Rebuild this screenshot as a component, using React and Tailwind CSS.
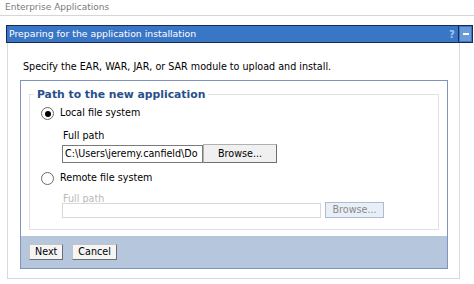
const Radio = ({ checked }) => (
  <span className="w-[13px] h-[13px] rounded-full border border-[#6b6b6b] bg-white flex items-center justify-center shrink-0">
    {checked && <span className="w-[6px] h-[6px] rounded-full bg-black" />}
  </span>
);

const App = () => {
  return (
    <div className="w-[474px] h-[284px] bg-white overflow-hidden text-[9.6px] text-black" style={{ fontFamily: '"DejaVu Sans", Verdana, sans-serif' }}>
      <div className="h-[16px] border-b border-[#d6d6d6] pl-[5px] pt-[3px] text-[#7a7a7a] text-[9px] leading-none">
        Enterprise Applications
      </div>

      <div className="mt-[9px] ml-[6px] mr-[1px] h-[18px] border border-[#1b2b50] bg-[#3a76c6] flex items-center">
        <span className="flex-1 pl-[2px] text-white text-[9.3px]">Preparing for the application installation</span>
        <span className="w-[10px] h-[14px] mr-[1px] flex items-center justify-center text-[#a9c6ea] font-bold text-[10px]">?</span>
        <span className="w-px h-full bg-[#1b2b50]" />
        <span className="w-[11px] h-[14px] mx-[1px] bg-[#6a9ad8] flex items-center justify-center">
          <span className="w-[6px] h-[2px] bg-white" />
        </span>
      </div>

      <div className="ml-[7px] w-[453px] h-[236px] border-x border-b border-[#d9d9d9] pt-[19px] px-[12px]">
        <div className="pl-[3px] leading-none">Specify the EAR, WAR, JAR, or SAR module to upload and install.</div>

        <div className="mt-[8px] w-[428px] h-[189px] border border-[#8094bd] flex flex-col">
          <div className="flex-1 px-[8px] pt-[9px]">
            <fieldset className="border border-[#e2e2e2] h-[140px] px-[10px]">
              <legend className="px-[3px] -ml-[6px] text-[10.8px] font-bold text-[#284f8c] leading-none">
                Path to the new application
              </legend>
              <div className="flex items-center gap-[6px] mt-[6px] pl-px">
                <Radio checked />
                <span>Local file system</span>
              </div>
              <div className="pl-[23px] mt-[10px] leading-none">Full path</div>
              <div className="ml-[22px] mt-[4px] flex items-center">
                <div className="w-[141px] h-[18px] border border-[#7a7a7a] bg-white px-[2px] flex items-center overflow-hidden whitespace-nowrap">
                  C:\Users\jeremy.canfield\Do
                </div>
                <button className="w-[74px] h-[19px] bg-[#f0f0f0] border border-[#b0b0b0] border-r-[#6e6e6e] border-b-[#6e6e6e] text-[9.6px]">
                  Browse...
                </button>
              </div>
              <div className="flex items-center gap-[6px] mt-[8px] pl-px">
                <Radio />
                <span>Remote file system</span>
              </div>
              <div className="pl-[23px] mt-[8px] leading-none text-[#b8b8b8]">Full path</div>
              <div className="ml-[22px] -mt-px flex items-center gap-[4px]">
                <div className="w-[259px] h-[15px] border border-[#d8d8d8] bg-white" />
                <button className="w-[59px] h-[16px] bg-[#e9eff7] border border-[#aebcd3] text-[#8a8a8a] text-[9.6px]">
                  Browse...
                </button>
              </div>
            </fieldset>
          </div>
          <div className="h-[32px] bg-[#b5c6dd] flex items-center gap-[9px] px-[8px] shrink-0">
            <button className="h-[16px] px-[5px] bg-[#f5f5f5] border border-[#c4c4c4] border-r-[#6e6e6e] border-b-[#6e6e6e] text-[9.6px] leading-none">
              Next
            </button>
            <button className="h-[16px] px-[5px] bg-[#f5f5f5] border border-[#c4c4c4] border-r-[#6e6e6e] border-b-[#6e6e6e] text-[9.6px] leading-none">
              Cancel
            </button>
          </div>
        </div>
      </div>
    </div>
  );
};

export default App;
